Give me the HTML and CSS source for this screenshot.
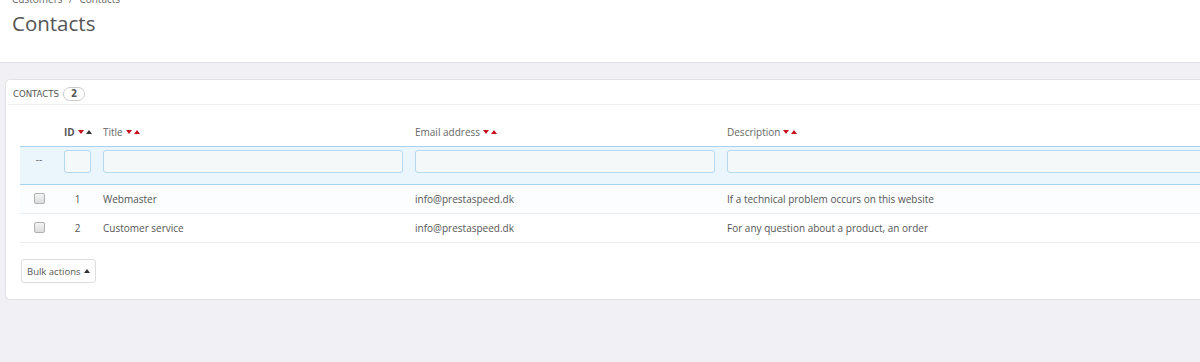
FILE: index.html
```html
<!DOCTYPE html>
<html>
<head>
<meta charset="utf-8">
<link rel="stylesheet" href="styles.css">
</head>
<body>
<div class="page">
  <header class="page-head">
    <div class="breadcrumb">Customers <span class="sep">/</span> Contacts</div>
    <h1 class="page-title">Contacts</h1>
  </header>
  <main class="content">
    <section class="panel">
      <div class="panel-heading">CONTACTS <span class="badge">2</span></div>
      <table class="grid">
        <colgroup>
          <col class="c-check"><col class="c-id"><col class="c-title"><col class="c-email"><col class="c-desc">
        </colgroup>
        <thead>
          <tr class="head-row">
            <th></th>
            <th class="active">ID<span class="sort"><i class="dn"></i><i class="up dark"></i></span></th>
            <th>Title<span class="sort"><i class="dn"></i><i class="up"></i></span></th>
            <th>Email address<span class="sort"><i class="dn"></i><i class="up"></i></span></th>
            <th>Description<span class="sort"><i class="dn"></i><i class="up"></i></span></th>
          </tr>
          <tr class="filter-row">
            <th class="dash">--</th>
            <th><input class="filter" type="text"></th>
            <th><input class="filter" type="text"></th>
            <th><input class="filter" type="text"></th>
            <th><input class="filter" type="text"></th>
          </tr>
        </thead>
        <tbody>
          <tr class="odd">
            <td class="chk"><span class="box"></span></td>
            <td class="num">1</td>
            <td>Webmaster</td>
            <td>info@prestaspeed.dk</td>
            <td>If a technical problem occurs on this website</td>
          </tr>
          <tr>
            <td class="chk"><span class="box"></span></td>
            <td class="num">2</td>
            <td>Customer service</td>
            <td>info@prestaspeed.dk</td>
            <td>For any question about a product, an order</td>
          </tr>
        </tbody>
      </table>
      <div class="panel-foot">
        <button class="bulk" type="button">Bulk actions <i class="caret"></i></button>
      </div>
    </section>
  </main>
</div>
</body>
</html>
```
FILE: styles.css
```css
html, body {
  margin: 0;
  padding: 0;
  overflow: hidden;
  background: #f1f1f5;
}
body {
  font-family: "Open Sans", "Liberation Sans", sans-serif;
  font-size: 10px;
  color: #555;
}
.page {
  width: 1260px;
}
.page-head {
  background: #fff;
  height: 63px;
  border-bottom: 1px solid #dfdfe6;
  padding: 0 12px;
  box-sizing: border-box;
  overflow: hidden;
}
.breadcrumb {
  font-size: 10px;
  line-height: 12px;
  margin-top: -7px;
  color: #666;
}
.breadcrumb .sep {
  padding: 0 4px;
}
.page-title {
  margin: 0;
  margin-top: 4px;
  font-size: 20.5px;
  font-weight: 400;
  line-height: 28px;
  color: #555;
}
.content {
  padding: 16px 0 0 5px;
}
.panel {
  background: #fff;
  border: 1px solid #e0e0e6;
  border-radius: 5px;
  padding: 0 0 16px 0;
  box-shadow: 0 1px 1px rgba(0,0,0,0.03);
}
.panel-heading {
  margin-left: 2px;
  padding: 4px 0 0 5px;
  height: 20px;
  border-bottom: 1px solid #eee;
  font-family: "DejaVu Sans Condensed", "Liberation Sans Narrow", sans-serif;
  font-size: 9.5px;
  line-height: 16px;
  color: #555;
  display: flex;
  align-items: center;
  gap: 4px;
}
.badge {
  display: inline-block;
  border: 1px solid #ccc;
  border-radius: 8px;
  padding: 0 7px;
  line-height: 12px;
  font-size: 10px;
  font-weight: bold;
  color: #555;
}
.grid {
  margin-left: 14px;
  margin-top: 12px;
  border-collapse: collapse;
  table-layout: fixed;
  width: 1240px;
}
.c-check { width: 38px; }
.c-id { width: 39px; }
.c-title { width: 312px; }
.c-email { width: 312px; }
.grid th, .grid td {
  padding: 0 6px;
  text-align: left;
  white-space: nowrap;
}
.head-row th {
  height: 29px;
  font-weight: 400;
  color: #666;
  vertical-align: middle;
}
.head-row th.active {
  font-weight: 700;
  color: #555;
}
.sort {
  display: inline-flex;
  gap: 2px;
  margin-left: 3px;
  vertical-align: middle;
  position: relative;
  top: -1px;
}
.sort i {
  display: block;
  width: 0;
  height: 0;
  border-left: 3px solid transparent;
  border-right: 3px solid transparent;
}
.sort .dn { border-top: 4px solid #c8101c; }
.sort .up { border-bottom: 4px solid #c8101c; }
.sort .up.dark { border-bottom-color: #333; }
.filter-row th {
  background: #ebf5fc;
  border-top: 1px solid #a5d2ef;
  border-bottom: 1px solid #a5d2ef;
  height: 38px;
  box-sizing: border-box;
  padding-top: 3px;
  padding-bottom: 0;
  vertical-align: top;
}
.filter-row th.dash {
  text-align: center;
  color: #666;
  padding: 6px 0 0 0;
  font-weight: 400;
  line-height: 12px;
  vertical-align: top;
}
.filter {
  display: block;
  width: 100%;
  height: 23px;
  box-sizing: border-box;
  border: 1px solid #b3d9f0;
  border-radius: 3px;
  background: #f5f8f9;
  padding: 0 4px;
  margin: 0;
}
tbody td {
  height: 28px;
  border-bottom: 1px solid #eaedef;
  color: #555;
  vertical-align: middle;
}
tbody tr.odd td {
  background: #fcfdfe;
}
td.num {
  text-align: center;
}
td.chk {
  text-align: center;
  padding: 0;
}
.box {
  display: inline-block;
  width: 9px;
  height: 9px;
  border: 1px solid #b0b0b0;
  border-radius: 2px;
  background: linear-gradient(#f4f4f4, #dcdcdc);
  vertical-align: middle;
  position: relative;
  top: -2px;
}
.panel-foot {
  padding: 16px 0 0 15px;
}
.bulk {
  font-family: "Open Sans", "Liberation Sans", sans-serif;
  font-size: 9.5px;
  color: #555;
  background: #fff;
  border: 1px solid #ddd;
  border-radius: 3px;
  height: 24px;
  padding: 0 5px;
  display: inline-flex;
  align-items: center;
  gap: 3px;
}
.caret {
  display: inline-block;
  width: 0;
  height: 0;
  border-left: 3px solid transparent;
  border-right: 3px solid transparent;
  border-bottom: 4px solid #333;
}
```
